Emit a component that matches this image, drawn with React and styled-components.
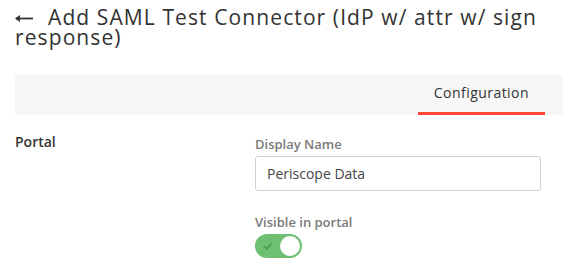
import React from 'react'
import styled, { createGlobalStyle } from 'styled-components'

const GlobalStyle = createGlobalStyle`
  html, body {
    margin: 0;
    padding: 0;
    background: #fff;
  }
  body {
    font-family: "Open Sans", "Liberation Sans", sans-serif;
    color: #333;
    overflow: hidden;
  }
`

const App = () => (
  <Page>
    <GlobalStyle />
    <Title>
      <BackArrow />
      Add SAML Test Connector (IdP w/ attr w/ sign response)
    </Title>
    <TabBar>
      <Tab active>Configuration</Tab>
    </TabBar>
    <Section>
      <SectionLabel>Portal</SectionLabel>
      <Fields>
        <Field>
          <FieldLabel>Display Name</FieldLabel>
          <Input defaultValue="Periscope Data" />
        </Field>
        <Field>
          <FieldLabel>Visible in portal</FieldLabel>
          <Toggle on />
        </Field>
      </Fields>
    </Section>
  </Page>
)

const BackArrow = () => (
  <ArrowSvg width="18" height="9" viewBox="0 0 18 9">
    <path d="M1 4.5 H18" stroke="#333" strokeWidth="1.8" />
    <path d="M0 4.5 L5 1 V8 Z" fill="#333" />
  </ArrowSvg>
)

const Toggle = ({ on }) => (
  <Track on={on ? 1 : 0}>
    <svg width="10" height="8" viewBox="0 0 10 8">
      <path d="M1 4 L3.8 6.8 L9 1.2" fill="none" stroke="#4a9a4f" strokeWidth="1.5" />
    </svg>
    <Knob />
  </Track>
)

const Page = styled('div')`
  padding: 0 0 0 15px;
`

const Title = styled('h1')`
  margin: 0;
  padding: 7px 10px 0 0;
  font-size: 21px;
  font-weight: 400;
  line-height: 20px;
  letter-spacing: 1.1px;
  color: #333;
`

const ArrowSvg = styled('svg')`
  display: inline-block;
  vertical-align: 2px;
  margin-right: 15px;
`

const TabBar = styled('div')`
  display: flex;
  justify-content: flex-end;
  margin-top: 28px;
  height: 40px;
  padding-right: 18px;
  background: #f7f7f7;
`

const Tab = styled('div')`
  display: flex;
  align-items: center;
  padding: 0 16px 2px;
  font-size: 14px;
  letter-spacing: 0.45px;
  color: #333;
  border-bottom: 3px solid ${p => (p.active ? '#ff4438' : 'transparent')};
`

const Section = styled('div')`
  display: grid;
  grid-template-columns: 240px 286px;
  padding-top: 17px;
`

const SectionLabel = styled('div')`
  font-size: 14px;
  font-weight: 600;
  color: #333;
`

const Fields = styled('div')`
  display: flex;
  flex-direction: column;
  gap: 22px;
  padding-top: 3px;
`

const Field = styled('div')`
  display: flex;
  flex-direction: column;
  gap: 3px;
`

const FieldLabel = styled('label')`
  font-size: 13px;
  font-weight: 600;
  color: #7a7a7a;
`

const Input = styled('input')`
  box-sizing: border-box;
  width: 100%;
  height: 35px;
  padding: 0 11px;
  border: 1px solid #d0d0d0;
  border-radius: 3px;
  font-family: inherit;
  font-size: 14px;
  color: #444;
  outline: none;
`

const Track = styled('div')`
  display: flex;
  align-items: center;
  justify-content: space-between;
  box-sizing: border-box;
  width: 47px;
  height: 24px;
  padding: 0 2px 0 8px;
  border-radius: 12px;
  background: ${p => (p.on ? '#6fbf73' : '#ccc')};
`

const Knob = styled('div')`
  width: 20px;
  height: 20px;
  border-radius: 50%;
  background: #fff;
`

export default App
